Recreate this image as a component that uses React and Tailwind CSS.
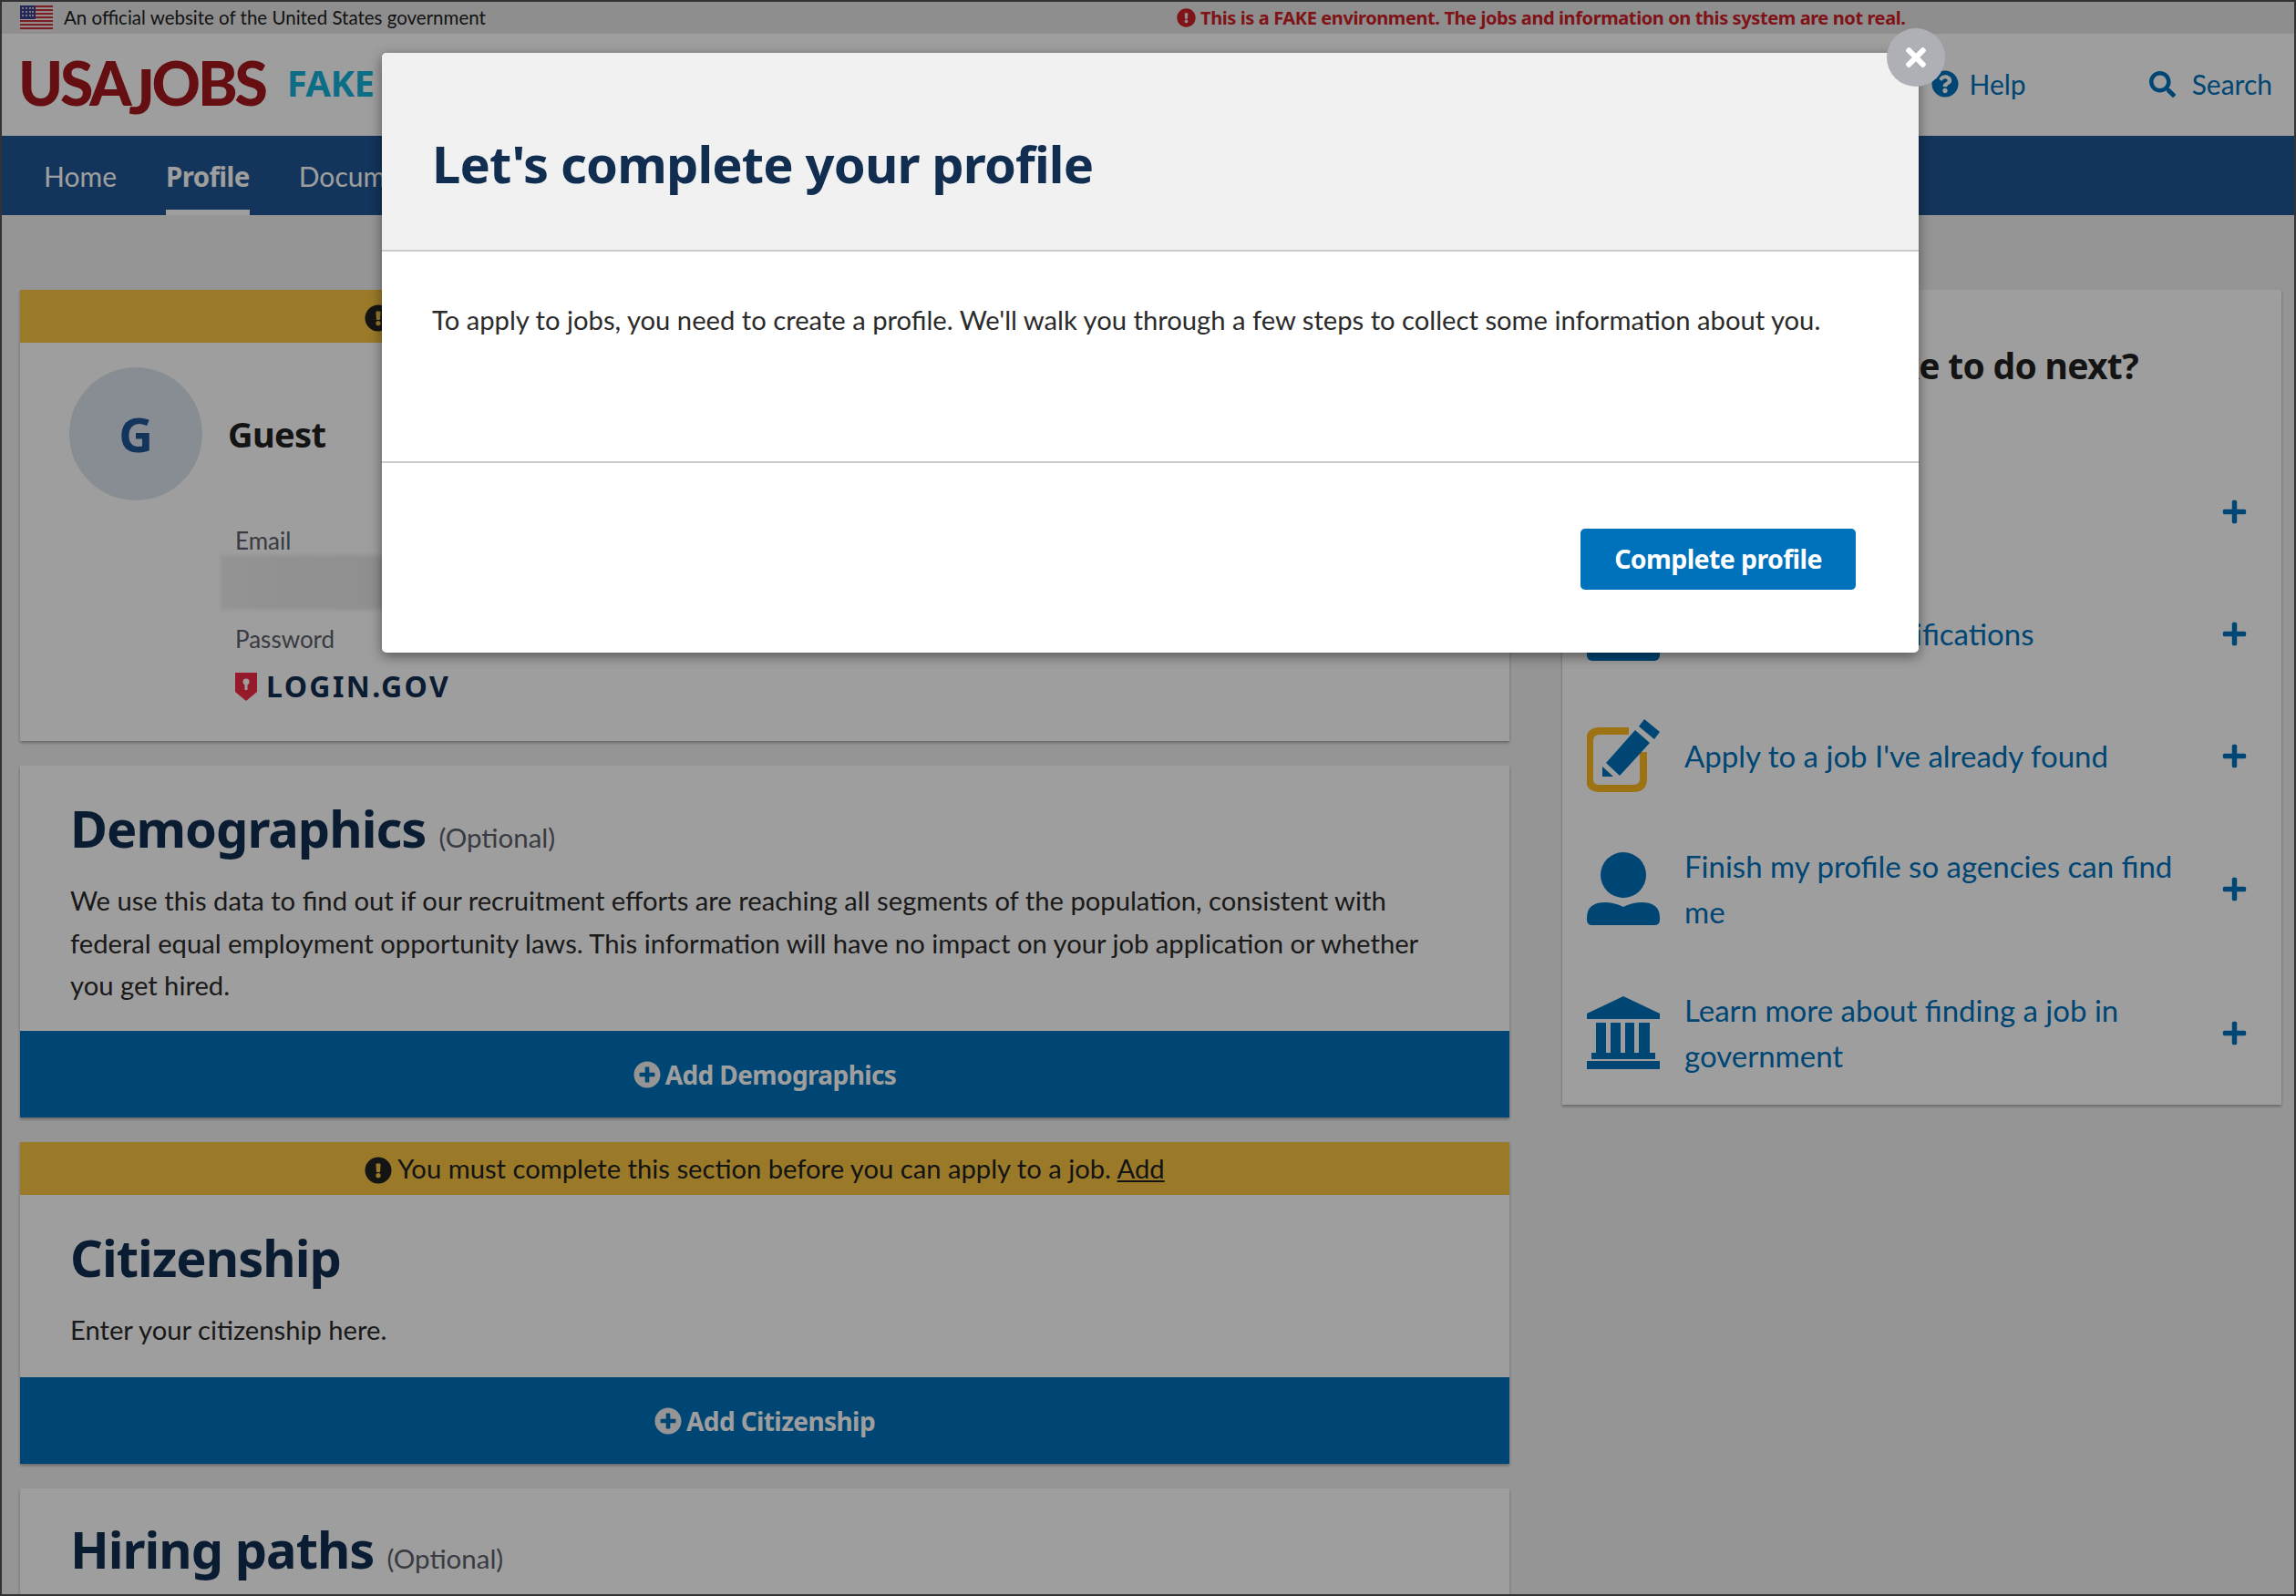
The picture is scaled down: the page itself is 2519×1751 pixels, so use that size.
import React from 'react'
import { FaQuestionCircle, FaSearch, FaPlus, FaPlusCircle, FaExclamationCircle, FaTimes } from 'react-icons/fa'

const Flag = () => (
  <svg width="36" height="28" viewBox="0 0 36 28" className="shrink-0">
    <rect width="36" height="28" fill="#f6f6f6" />
    {[0, 4, 8, 12, 16, 20, 24].map((y) => <rect key={y} y={y} width="36" height="2.2" fill="#c8333a" />)}
    <rect width="17" height="15" fill="#3b3f8c" />
    {[3, 7, 11].map((y) => [3, 7, 11, 14].map((x) => <circle key={`${x}-${y}`} cx={x} cy={y} r="0.9" fill="#fff" />))}
  </svg>
)

const Warning = ({ children }) => (
  <div className="h-[58px] bg-[#f9c642] flex items-center justify-center gap-[6px] text-[29.2px] text-[#212121]">
    <FaExclamationCircle className="text-[30px] shrink-0 mt-[3px]" />
    <span>{children} <span className="underline">Add</span></span>
  </div>
)

const AddButton = ({ label }) => (
  <div className="h-[95px] bg-[#0071bb] flex items-center justify-center gap-[5px] text-white font-['Noto_Sans'] font-bold text-[28px] tracking-[-0.6px]">
    <FaPlusCircle className="text-[30px] text-[#f1f1f1]" />
    <span>{label}</span>
  </div>
)

const Card = ({ children, className = '' }) => (
  <div className={`bg-white shadow-[0_2px_3px_rgba(0,0,0,0.3)] ${className}`}>{children}</div>
)

const EditIcon = () => (
  <svg width="80" height="80" viewBox="0 0 80 80">
    <path d="M46 13H14Q3 13 3 24V66Q3 76 14 76H50Q62 76 62 66V36" fill="none" stroke="#fdb81e" strokeWidth="8" />
    <path d="M63 0L80 14L74 22L57 8ZM53 12L69 26L36 62L21 48Z" fill="#0071bb" />
    <path d="M17 52L29 63L17 63Z" fill="#0071bb" />
  </svg>
)

const BriefIcon = () => (
  <svg width="80" height="80" viewBox="0 0 80 80">
    <rect y="4" width="80" height="66" rx="6" fill="#0071bb" />
  </svg>
)

const UserIcon = () => (
  <svg width="80" height="80" viewBox="0 0 80 80" fill="#0071bb">
    <ellipse cx="40" cy="25" rx="25" ry="25" />
    <path d="M0 72Q0 55 20 55Q30 55 40 60Q50 55 60 55Q80 55 80 72V74Q80 80 74 80H6Q0 80 0 74Z" />
  </svg>
)

const BankIcon = () => (
  <svg width="80" height="80" viewBox="0 0 80 80" fill="#0071bb">
    <path d="M40 0L80 19V25H0V19Z" />
    <path d="M10 29H21V62H10ZM26 29H37V62H26ZM42 29H52V62H42ZM57 29H69V62H57Z" />
    <rect x="5" y="62" width="70" height="7" />
    <rect y="71" width="80" height="9" />
  </svg>
)

const items = [
  { text: 'Search for jobs', icon: <BriefIcon />, h: 134 },
  { text: 'Check my job notifications', icon: <BriefIcon />, h: 134 },
  { text: "Apply to a job I've already found", icon: <EditIcon />, h: 134 },
  { text: 'Finish my profile so agencies can find me', icon: <UserIcon />, h: 158 },
  { text: 'Learn more about finding a job in government', icon: <BankIcon />, h: 158 },
]

const heading = "font-['Noto_Sans'] font-bold text-[#112e51] text-[56px] tracking-[-1px] leading-[70px]"

export default function App() {
  return (
    <div className="relative h-[1751px] w-[2519px] overflow-hidden bg-[#f1f1f1] border-2 border-[#333]" style={{ fontFamily: 'Lato, "Liberation Sans", sans-serif' }}>
      {/* banner */}
      <div className="h-[35px] bg-[#e6e6e6] flex items-center pl-[20px] text-[20.5px] text-[#212121]">
        <Flag />
        <span className="ml-[12px] w-[1221px]">An official website of the United States government</span>
        <FaExclamationCircle className="text-[#cd2026] text-[21px] mr-[5px]" />
        <span className="font-['Noto_Sans'] font-bold text-[20px] tracking-[-0.4px] text-[#cd2026]">This is a FAKE environment. The jobs and information on this system are not real.</span>
      </div>

      {/* header */}
      <div className="h-[112px] bg-white flex items-center pl-[18px] pr-[24px]">
        <span className="text-[#a3191f] font-black text-[66px] tracking-[-3.2px] leading-none mr-[24px] mt-[-4px]">USA<span className="inline-block translate-y-[9px]">J</span>OBS</span>
        <span className="text-[#12b0d8] font-['Noto_Sans'] font-bold text-[40px] leading-none tracking-[-0.5px] mt-[-4px]">FAKE</span>
        <div className="ml-auto flex items-center text-[#0071bb] text-[30px] mt-[-2px]">
          <FaQuestionCircle className="text-[30px] mr-[12px]" />
          <span className="mr-[135px]">Help</span>
          <FaSearch className="text-[29px] mr-[18px]" />
          <span>Search</span>
        </div>
      </div>

      {/* nav */}
      <div className="h-[87px] bg-[#205493] flex items-stretch pl-[46px] text-[30px] text-white">
        <div className="flex items-center mr-[54px] pt-[2px]">Home</div>
        <div className="flex items-center font-['Noto_Sans'] font-bold text-[29.5px] tracking-[-0.6px] mr-[54px] border-b-[6px] border-white pt-[10px]">Profile</div>
        <div className="flex items-center pt-[2px]">Documents</div>
      </div>

      {/* page */}
      <div className="flex items-start gap-[58px] pl-[20px] pr-[14px] pt-[82px]">
        <div className="w-[1634px] shrink-0 flex flex-col gap-[27px]">
          <Card className="h-[495px]">
            <Warning>You must complete this section before you can apply to a job.</Warning>
            <div className="pl-[54px] pt-[27px]">
              <div className="flex items-center">
                <div className="w-[146px] h-[146px] rounded-full bg-[#dce4ef] flex items-center justify-center text-[#205493] font-['Noto_Sans'] font-bold text-[52px]">G</div>
                <span className="ml-[28px] font-['Noto_Sans'] text-[38px] tracking-[-0.6px] font-bold text-[#212121]">Guest</span>
              </div>
              <div className="ml-[182px] mt-[27px] text-[26px] leading-[34px] text-[#5b616b]">Email</div>
              <div className="ml-[166px] h-[60px] w-[400px] bg-gradient-to-r from-[#eeeeee] to-[#dddddd] blur-[2px] -mt-[1px]" />
              <div className="ml-[182px] mt-[15px] text-[26px] leading-[34px] text-[#5b616b]">Password</div>
              <div className="ml-[182px] mt-[11px] flex items-center">
                <svg width="24" height="32" viewBox="0 0 24 32"><path d="M0 1H24V22L12 32L0 22Z" fill="#f02a45" /><circle cx="12" cy="11" r="3.5" fill="#fff" /><rect x="10.5" y="12" width="3" height="8" fill="#fff" /></svg>
                <span className="ml-[10px] text-[32px] font-['Noto_Sans'] font-bold tracking-[2.4px] text-[#112e51]">LOGIN.GOV</span>
              </div>
            </div>
          </Card>

          <Card>
            <div className="pl-[55px] pr-[60px] pt-[33px] h-[291px]">
              <div className="flex items-baseline">
                <h2 className={heading}>Demographics</h2>
                <span className="ml-[14px] text-[29.5px] text-[#5b616b]">(Optional)</span>
              </div>
              <p className="mt-[22px] text-[29.2px] leading-[46.5px] text-[#2b2b2b]">We use this data to find out if our recruitment efforts are reaching all segments of the population, consistent with federal equal employment opportunity laws. This information will have no impact on your job application or whether you get hired.</p>
            </div>
            <AddButton label="Add Demographics" />
          </Card>

          <Card>
            <Warning>You must complete this section before you can apply to a job.</Warning>
            <div className="pl-[55px] pt-[33px] h-[200px]">
              <h2 className={heading}>Citizenship</h2>
              <p className="mt-[22px] text-[29.2px] leading-[46.5px] text-[#2b2b2b]">Enter your citizenship here.</p>
            </div>
            <AddButton label="Add Citizenship" />
          </Card>

          <Card className="h-[200px]">
            <div className="pl-[55px] pt-[31px] flex items-baseline">
              <h2 className={heading}>Hiring paths</h2>
              <span className="ml-[14px] text-[29.5px] text-[#5b616b]">(Optional)</span>
            </div>
          </Card>
        </div>

        <Card className="w-[789px] shrink-0 h-[894px] px-[27px]">
          <div className="pt-[54px] pr-[130px] h-[160px] font-['Noto_Sans'] text-[39px] tracking-[-0.7px] font-bold text-[#212121] text-right whitespace-nowrap">What would you like to do next?</div>
          <div className="mt-[16px]">
            {items.map((it) => (
              <div key={it.text} className="flex items-center text-[#0071bb]" style={{ height: it.h }}>
                <span className="w-[80px] shrink-0 flex justify-center">{it.icon}</span>
                <span className="ml-[27px] flex-1 text-[33px] leading-[50px]">{it.text}</span>
                <FaPlus className="ml-[40px] text-[29px] mr-[10px] shrink-0" />
              </div>
            ))}
          </div>
        </Card>
      </div>

      {/* overlay */}
      <div className="absolute inset-0 bg-black/38" />

      {/* modal */}
      <div className="absolute left-[417px] top-[56px] w-[1686px] h-[658px] bg-white rounded-[5px] shadow-[0_4px_14px_rgba(0,0,0,0.45)] flex flex-col">
        <div className="h-[218px] bg-[#f1f1f1] border-b-2 border-[#c9cbcd] rounded-t-[5px] flex items-center pl-[55px] pt-[26px]">
          <h1 className="font-['Noto_Sans'] text-[56px] font-bold tracking-[-0.85px] text-[#112e51]">Let's complete your profile</h1>
        </div>
        <div className="h-[232px] border-b-2 border-[#c9cbcd] pl-[55px] pt-[52px] text-[29.2px] leading-[46px] text-[#2b2b2b]">
          To apply to jobs, you need to create a profile. We'll walk you through a few steps to collect some information about you.
        </div>
        <div className="flex-1 flex justify-end items-start pr-[69px] pt-[72px]">
          <button className="w-[302px] h-[67px] rounded-[5px] bg-[#0071bb] text-white font-['Noto_Sans'] font-bold text-[28.5px] tracking-[-0.6px]">Complete profile</button>
        </div>
        <div className="absolute -top-[27px] -right-[29px] w-[64px] h-[64px] rounded-full bg-[#aeb0b5] flex items-center justify-center text-white text-[32px]">
          <FaTimes />
        </div>
      </div>
    </div>
  )
}
